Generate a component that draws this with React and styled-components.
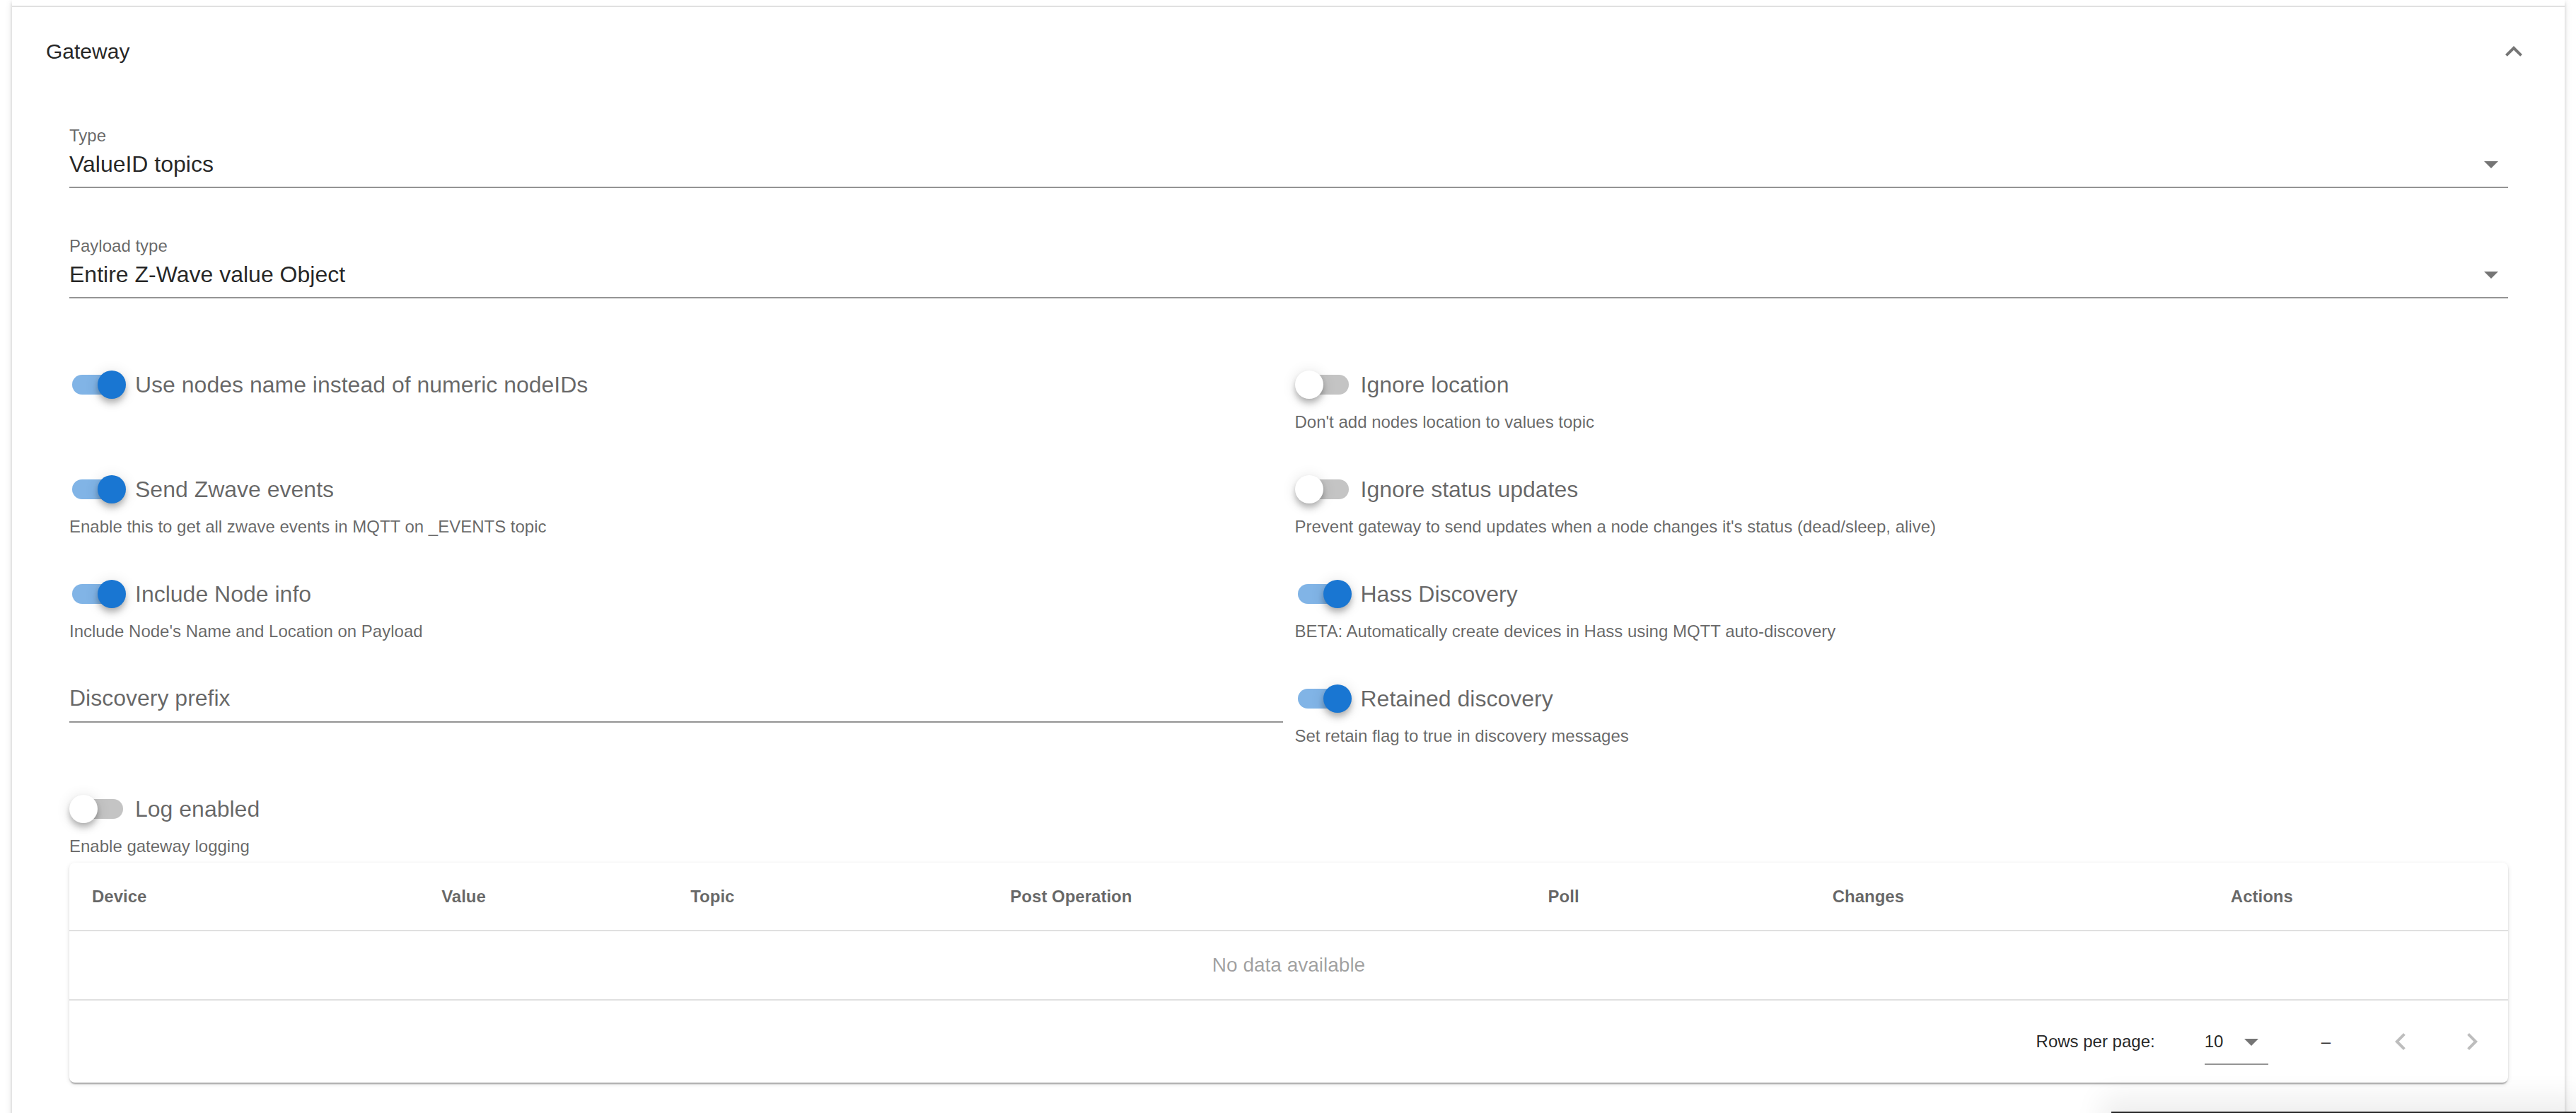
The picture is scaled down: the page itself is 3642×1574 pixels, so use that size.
import React from "react";
import styled, { createGlobalStyle } from "styled-components";

const GlobalStyle = createGlobalStyle`
  html, body {
    margin: 0;
    padding: 0;
    background: #ffffff;
  }
  body {
    font-family: "Liberation Sans", Arial, Helvetica, sans-serif;
    color: rgba(0, 0, 0, 0.87);
    overflow: hidden;
  }
  * { box-sizing: border-box; }
`;

const Page = styled.div`
  height: 1574px;
  overflow: hidden;
  padding: 0 16px 0 17px;
  background: #ffffff;
`;

const Panels = styled.div`
  background: #ffffff;
  box-shadow: 0 6px 2px -4px rgba(0, 0, 0, 0.2), 0 4px 4px 0 rgba(0, 0, 0, 0.14),
    0 2px 10px 0 rgba(0, 0, 0, 0.12);
  min-height: 1700px;
`;

const PrevPanelTail = styled.div`
  height: 8px;
  background: #ffffff;
`;

const Panel = styled.section`
  border-top: 2px solid rgba(0, 0, 0, 0.12);
  background: #ffffff;
`;

const PanelHeader = styled.div`
  height: 126px;
  padding: 0 48px;
  display: flex;
  align-items: center;
  justify-content: space-between;
  font-size: 30px;
  color: rgba(0, 0, 0, 0.87);
`;

const HeaderTitle = styled.span`
  line-height: 40px;
`;

const Icon = styled.svg`
  width: ${(p) => p.$size || 48}px;
  height: ${(p) => p.$size || 48}px;
  flex: none;
  fill: ${(p) => p.$color || "rgba(0,0,0,0.54)"};
  display: block;
`;

const PanelContent = styled.div`
  padding: 44px 80px 0 81px;
`;

const SelectField = styled.div`
  margin-top: ${(p) => p.$gap || 0}px;
`;

const FieldLabel = styled.div`
  font-size: 24px;
  line-height: 24px;
  height: 24px;
  color: rgba(0, 0, 0, 0.6);
`;

const SelectSlot = styled.div`
  height: 62px;
  padding: 8px 0 12px;
  display: flex;
  align-items: center;
  border-bottom: 2px solid rgba(0, 0, 0, 0.42);
`;

const SelectValue = styled.div`
  flex: 1;
  font-size: 32px;
  line-height: 40px;
  color: rgba(0, 0, 0, 0.87);
`;

const SettingsGrid = styled.div`
  margin-top: 98px;
  display: grid;
  grid-template-columns: 1fr 1fr;
  column-gap: 17px;
  row-gap: 55px;
  align-items: start;
`;

const SwitchCell = styled.div`
  display: flex;
  flex-direction: column;
`;

const SwitchLine = styled.div`
  height: 48px;
  display: flex;
  align-items: center;
`;

const SwitchControl = styled.div`
  position: relative;
  width: 80px;
  height: 48px;
  flex: none;
`;

const SwitchTrack = styled.div`
  position: absolute;
  left: 4px;
  top: 10px;
  width: 72px;
  height: 28px;
  border-radius: 14px;
  background: ${(p) => (p.$on ? "rgba(25, 118, 210, 0.55)" : "#c4c4c4")};
`;

const SwitchThumb = styled.div`
  position: absolute;
  top: 4px;
  left: ${(p) => (p.$on ? 40 : 0)}px;
  width: 40px;
  height: 40px;
  border-radius: 50%;
  background: ${(p) => (p.$on ? "#1976d2" : "#ffffff")};
  box-shadow: 0 4px 8px -2px rgba(0, 0, 0, 0.2), 0 8px 10px 0 rgba(0, 0, 0, 0.14),
    0 2px 20px 0 rgba(0, 0, 0, 0.12);
`;

const SwitchLabel = styled.span`
  margin-left: 13px;
  font-size: 32px;
  line-height: 40px;
  color: rgba(0, 0, 0, 0.6);
  white-space: nowrap;
`;

const Hint = styled.div`
  margin-top: 13px;
  font-size: 24px;
  line-height: 32px;
  color: rgba(0, 0, 0, 0.6);
  white-space: nowrap;
`;

const TextFieldCell = styled.div`
  min-height: 101px;
`;

const TextFieldSlot = styled.div`
  padding: 3px 0 13px;
  border-bottom: 2px solid rgba(0, 0, 0, 0.42);
`;

const TextFieldLabel = styled.div`
  font-size: 32px;
  line-height: 40px;
  color: rgba(0, 0, 0, 0.6);
`;

const TableCard = styled.div`
  margin-top: 7px;
  background: #ffffff;
  border-radius: 8px;
  box-shadow: 0 4px 2px -2px rgba(0, 0, 0, 0.2), 0 2px 2px 0 rgba(0, 0, 0, 0.14),
    0 2px 6px 0 rgba(0, 0, 0, 0.12);
  overflow: hidden;
`;

const Table = styled.table`
  width: 100%;
  border-collapse: collapse;
  table-layout: fixed;
`;

const Th = styled.th`
  height: 96px;
  padding: 0 32px;
  text-align: left;
  font-size: 24px;
  font-weight: 700;
  color: rgba(0, 0, 0, 0.6);
  border-bottom: 2px solid rgba(0, 0, 0, 0.12);
  white-space: nowrap;
`;

const EmptyCell = styled.td`
  height: 98px;
  padding: 0 32px;
  text-align: center;
  font-size: 28px;
  color: rgba(0, 0, 0, 0.38);
  border-bottom: 2px solid rgba(0, 0, 0, 0.12);
`;

const TableFooter = styled.div`
  height: 116px;
  display: flex;
  align-items: center;
  justify-content: flex-end;
  padding-right: 15px;
  font-size: 24px;
  color: rgba(0, 0, 0, 0.87);
`;

const FooterText = styled.span`
  line-height: 32px;
  white-space: nowrap;
`;

const FooterSelect = styled.div`
  margin: 13px 0 0 70px;
  width: 90px;
  height: 53px;
  padding-bottom: 11px;
  display: flex;
  align-items: center;
  border-bottom: 2px solid rgba(0, 0, 0, 0.42);
`;

const FooterSelectValue = styled.span`
  flex: 1;
  line-height: 40px;
`;

const PageRange = styled.span`
  margin: 0 63px 0 75px;
  line-height: 32px;
`;

const PagerButton = styled.button`
  width: 72px;
  height: 72px;
  margin-left: ${(p) => p.$gap || 0}px;
  border: none;
  background: transparent;
  padding: 0;
  display: flex;
  align-items: center;
  justify-content: center;
  border-radius: 50%;
`;

const BottomSheetEdge = styled.div`
  position: fixed;
  left: 2985px;
  right: 0;
  top: 1572px;
  height: 40px;
  background: #262626;
  box-shadow: 0 -6px 40px 14px rgba(0, 0, 0, 0.07);
`;

const ChevronUp = () => (
  <Icon viewBox="0 0 24 24">
    <path d="M7.41,15.41L12,10.83L16.59,15.41L18,14L12,8L6,14L7.41,15.41Z" />
  </Icon>
);

const MenuDown = ({ size }) => (
  <Icon viewBox="0 0 24 24" $size={size}>
    <path d="M7,10L12,15L17,10H7Z" />
  </Icon>
);

const ChevronLeft = () => (
  <Icon viewBox="0 0 24 24" $color="rgba(0,0,0,0.26)">
    <path d="M15.41,16.58L10.83,12L15.41,7.41L14,6L8,12L14,18L15.41,16.58Z" />
  </Icon>
);

const ChevronRight = () => (
  <Icon viewBox="0 0 24 24" $color="rgba(0,0,0,0.26)">
    <path d="M8.59,16.58L13.17,12L8.59,7.41L10,6L16,12L10,18L8.59,16.58Z" />
  </Icon>
);

const Switch = ({ on, label, hint }) => (
  <SwitchCell>
    <SwitchLine>
      <SwitchControl>
        <SwitchTrack $on={on} />
        <SwitchThumb $on={on} />
      </SwitchControl>
      <SwitchLabel>{label}</SwitchLabel>
    </SwitchLine>
    {hint && <Hint>{hint}</Hint>}
  </SwitchCell>
);

const Select = ({ label, value, gap }) => (
  <SelectField $gap={gap}>
    <FieldLabel>{label}</FieldLabel>
    <SelectSlot>
      <SelectValue>{value}</SelectValue>
      <MenuDown />
    </SelectSlot>
  </SelectField>
);

const columns = [
  { name: "Device", width: 494 },
  { name: "Value", width: 352 },
  { name: "Topic", width: 452 },
  { name: "Post Operation", width: 760 },
  { name: "Poll", width: 402 },
  { name: "Changes", width: 563 },
  { name: "Actions", width: 424 },
];

export default function App() {
  return (
    <Page>
      <GlobalStyle />
      <Panels>
        <PrevPanelTail />
        <Panel>
          <PanelHeader>
            <HeaderTitle>Gateway</HeaderTitle>
            <ChevronUp />
          </PanelHeader>
          <PanelContent>
            <Select label="Type" value="ValueID topics" />
            <Select label="Payload type" value="Entire Z-Wave value Object" gap={70} />

            <SettingsGrid>
              <Switch on label="Use nodes name instead of numeric nodeIDs" />
              <Switch
                on={false}
                label="Ignore location"
                hint="Don't add nodes location to values topic"
              />
              <Switch
                on
                label="Send Zwave events"
                hint="Enable this to get all zwave events in MQTT on _EVENTS topic"
              />
              <Switch
                on={false}
                label="Ignore status updates"
                hint="Prevent gateway to send updates when a node changes it's status (dead/sleep, alive)"
              />
              <Switch
                on
                label="Include Node info"
                hint="Include Node's Name and Location on Payload"
              />
              <Switch
                on
                label="Hass Discovery"
                hint="BETA: Automatically create devices in Hass using MQTT auto-discovery"
              />
              <TextFieldCell>
                <TextFieldSlot>
                  <TextFieldLabel>Discovery prefix</TextFieldLabel>
                </TextFieldSlot>
              </TextFieldCell>
              <Switch
                on
                label="Retained discovery"
                hint="Set retain flag to true in discovery messages"
              />
              <Switch on={false} label="Log enabled" hint="Enable gateway logging" />
            </SettingsGrid>

            <TableCard>
              <Table>
                <colgroup>
                  {columns.map((c) => (
                    <col key={c.name} style={{ width: c.width }} />
                  ))}
                </colgroup>
                <thead>
                  <tr>
                    {columns.map((c) => (
                      <Th key={c.name}>{c.name}</Th>
                    ))}
                  </tr>
                </thead>
                <tbody>
                  <tr>
                    <EmptyCell colSpan={columns.length}>No data available</EmptyCell>
                  </tr>
                </tbody>
              </Table>
              <TableFooter>
                <FooterText>Rows per page:</FooterText>
                <FooterSelect>
                  <FooterSelectValue>10</FooterSelectValue>
                  <MenuDown />
                </FooterSelect>
                <PageRange>–</PageRange>
                <PagerButton aria-label="Previous page">
                  <ChevronLeft />
                </PagerButton>
                <PagerButton aria-label="Next page" $gap={29}>
                  <ChevronRight />
                </PagerButton>
              </TableFooter>
            </TableCard>
          </PanelContent>
        </Panel>
      </Panels>
      <BottomSheetEdge />
    </Page>
  );
}
